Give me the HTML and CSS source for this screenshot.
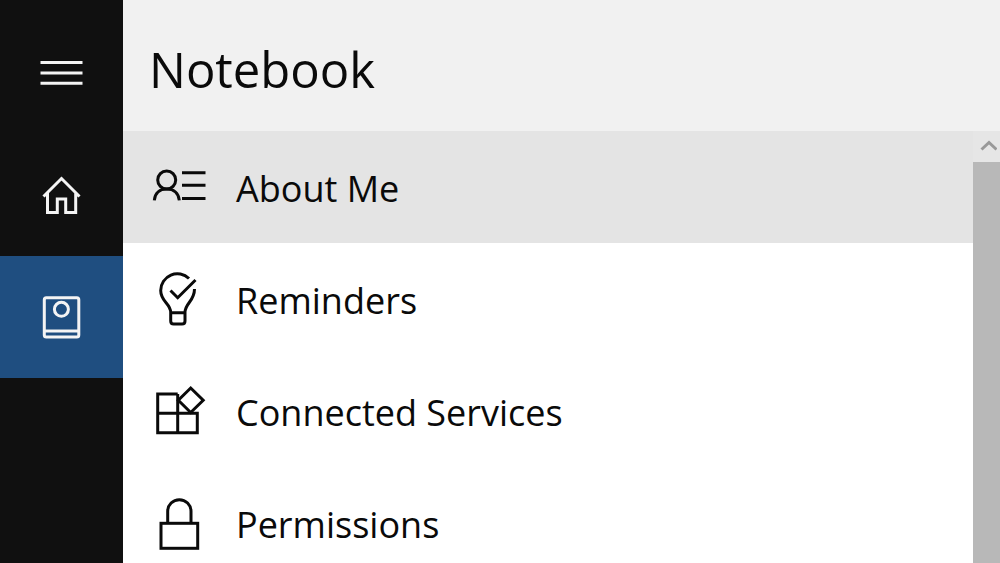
FILE: index.html
```html
<!DOCTYPE html>
<html lang="en">
<head>
    <meta charset="UTF-8">
    <meta name="viewport" content="width=device-width, initial-scale=1.0">
    <title>Notebook</title>
    <link rel="stylesheet" href="styles.css">
</head>
<body>
    <nav class="sidebar">
        <button class="sidebar-item" type="button" aria-label="Menu">
            <svg class="sidebar-icon" viewBox="0 0 49 48">
                <path d="M3.500 13.500H45.500M3.500 24H45.500M3.500 34.200H45.500"/>
            </svg>
        </button>
        <a class="sidebar-item" href="#home" aria-label="Home">
            <svg class="sidebar-icon" viewBox="0 0 49 48">
                <path d="M6.500 25.500L24.500 7.500L42.500 25.500M10.500 22V41.500H20.300V28H28.700V41.500H38.700V22"/>
            </svg>
        </a>
        <a class="sidebar-item active" href="#notebook" aria-label="Notebook">
            <svg class="sidebar-icon" viewBox="0 0 49 48">
                <rect x="7.3" y="4.7" width="34.5" height="39.3" rx="2"/>
                <path d="M7.3 38H41.8"/>
                <circle cx="24.4" cy="16.3" r="7"/>
            </svg>
        </a>
    </nav>

    <main class="notebook">
        <header class="notebook-header">
            <h1>Notebook</h1>
        </header>
        <div class="notebook-body">
            <ul class="menu">
                <li>
                    <a class="menu-item active" href="#about">
                        <svg class="menu-icon" viewBox="0 0 56 56">
                            <circle cx="14.7" cy="21" r="9"/>
                            <path d="M2.3 41.3C3 34 8 30 14.7 30S26.5 34 27.3 41.3"/>
                            <path d="M30 13.7H53.5M30 26.3H53.5M30 39.5H53.5"/>
                        </svg>
                        <span class="menu-title">About Me</span>
                    </a>
                </li>
                <li>
                    <a class="menu-item" href="#reminders">
                        <svg class="menu-icon" viewBox="0 0 56 56">
                            <path d="M37 7.5A16.7 16.7 0 0 0 8.700 19.500C8.7 31 18.7 32 18.7 41.500V50Q18.7 53 21.7 53H30Q33 53 33 50V41.500C33 32 42.500 30.500 42.500 18M18.700 41.700H33"/>
                            <path d="M18.5 19.5L25.7 26.7L43.5 9"/>
                        </svg>
                        <span class="menu-title">Reminders</span>
                    </a>
                </li>
                <li>
                    <a class="menu-item" href="#services">
                        <svg class="menu-icon" viewBox="0 0 56 56">
                            <path d="M25.7 11H5.7V49.7H45.3V30.3H5.7M25.7 11V49.7"/>
                            <path d="M38.7 5L51.2 17.2L38.7 29.5L26.3 17.2Z"/>
                        </svg>
                        <span class="menu-title">Connected Services</span>
                    </a>
                </li>
                <li>
                    <a class="menu-item" href="#permissions">
                        <svg class="menu-icon" viewBox="0 0 56 56">
                            <rect x="9" y="28.3" width="36.7" height="25"/>
                            <path d="M15.7 28.3V16.3A11.65 11.65 0 0 1 39 16.3V28.3"/>
                        </svg>
                        <span class="menu-title">Permissions</span>
                    </a>
                </li>
            </ul>
            <div class="scrollbar">
                <button class="scroll-up" type="button" aria-label="Scroll up">
                    <svg viewBox="0 0 17 12">
                        <path d="M1.500 9.500L9 2.500L16.500 9.500"/>
                    </svg>
                </button>
                <div class="scroll-thumb"></div>
            </div>
        </div>
    </main>
</body>
</html>
```
FILE: styles.css
```css
* {
    box-sizing: border-box;
}

body {
    font-family: "Open Sans", "Noto Sans", sans-serif;
    margin: 0;
    display: flex;
    height: 100vh;
    background: white;
    color: #0a0a0a;
    overflow: hidden;
}

svg {
    display: block;
    fill: none;
    stroke: currentColor;
}

/* Sidebar */
.sidebar {
    flex: none;
    width: 123px;
    padding-top: 12px;
    background: #101010;
}

.sidebar-item {
    display: flex;
    align-items: center;
    justify-content: center;
    width: 100%;
    height: 122px;
    padding: 0;
    border: none;
    background: none;
    color: #f4f4f4;
    cursor: pointer;
}

.sidebar-item.active {
    background: #1f4e80;
}

.sidebar-icon {
    width: 49px;
    height: 48px;
    stroke-width: 3;
}

/* Notebook */
.notebook {
    flex: 1;
    min-width: 0;
    display: flex;
    flex-direction: column;
}

.notebook-header {
    flex: none;
    padding: 37px 26px 30px;
    background: #f1f1f1;
}

.notebook-header h1 {
    margin: 0;
    font-size: 49px;
    line-height: 64px;
    font-weight: 400;
}

.notebook-body {
    flex: 1;
    min-height: 0;
    display: flex;
}

.menu {
    flex: 1;
    margin: 0;
    padding: 0;
    list-style: none;
    overflow: hidden;
}

.menu-item {
    display: flex;
    align-items: center;
    gap: 28px;
    height: 112px;
    padding-left: 29px;
    color: inherit;
    font-size: 36px;
    text-decoration: none;
    white-space: nowrap;
}

.menu-item.active {
    background: #e4e4e4;
}

.menu-icon {
    flex: none;
    width: 56px;
    height: 56px;
    stroke-width: 3;
}

.menu-title {
    padding-top: 3px;
}

/* Scrollbar */
.scrollbar {
    flex: none;
    display: flex;
    flex-direction: column;
    width: 27px;
}

.scroll-up {
    display: flex;
    align-items: center;
    justify-content: flex-end;
    height: 31px;
    padding: 0 3px 2px 0;
    border: none;
    background: #e6e6e6;
    color: #999;
}

.scroll-up svg {
    width: 17px;
    height: 12px;
    stroke-width: 3;
}

.scroll-thumb {
    flex: 1;
    background: #b8b8b8;
}
```
